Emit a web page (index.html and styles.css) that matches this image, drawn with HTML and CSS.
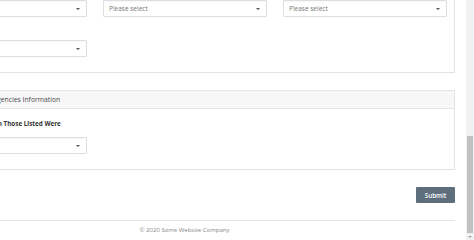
FILE: index.html
```html
<!DOCTYPE html>
<html lang="en">
<head>
  <meta charset="UTF-8" />
  <title>Referral Form</title>
  <link rel="stylesheet" href="styles.css">
</head>
<body>
  <div class="viewport">
    <div class="wrap">

      <!-- Contact panel (scrolled past) -->
      <div class="panel panel-top">
        <div class="panel-body">
          <div class="row">
            <div class="field">
              <label>Relationship</label>
              <div class="select"></div>
            </div>
            <div class="field">
              <label>Preferred Contact</label>
              <div class="select"><span class="placeholder">Please select</span></div>
            </div>
            <div class="field">
              <label>Contact Time</label>
              <div class="select"><span class="placeholder">Please select</span></div>
            </div>
          </div>
          <div class="row">
            <div class="field">
              <label>Language</label>
              <div class="select"></div>
            </div>
          </div>
        </div>
      </div>

      <!-- Agencies panel -->
      <div class="panel">
        <div class="panel-heading">Contact with Other Agencies Information</div>
        <div class="panel-body">
          <div class="row">
            <div class="field">
              <label class="strong">Any Agencies Other Than Those Listed Were</label>
              <div class="select"></div>
            </div>
          </div>
        </div>
      </div>

      <div class="actions">
        <button type="submit">Submit</button>
      </div>

      <hr>
      <footer>&copy; 2020 Some Website Company</footer>
    </div>
  </div>

  <div class="scrollbar">
    <div class="track"></div>
    <div class="thumb"></div>
    <div class="arrow"></div>
  </div>
</body>
</html>
```

FILE: styles.css
```css
* {
  box-sizing: border-box;
}

body {
  margin: 0;
  height: 240px;
  display: flex;
  background: #fff;
  font-family: 'Open Sans', 'Liberation Sans', sans-serif;
  color: #333;
  overflow: hidden;
}

.viewport {
  flex: 1;
  overflow: hidden;
}

.wrap {
  width: 541px;
  margin-left: -86px;
  margin-top: -22px;
}

.panel {
  border: 1px solid #e3e3e3;
  margin-bottom: 17px;
  background: #fff;
}

.panel-heading {
  height: 18px;
  line-height: 17px;
  padding-left: 16px;
  background: #f7f7f7;
  border-bottom: 1px solid #e3e3e3;
  font-size: 6.8px;
  color: #4a4a4a;
  white-space: nowrap;
}

.panel-body {
  padding: 10px 8px 15px;
}

.panel-top .panel-body {
  padding-top: 8px;
  padding-bottom: 15px;
}

.row {
  display: grid;
  grid-template-columns: repeat(3, 164px);
  column-gap: 16px;
}

.row + .row {
  margin-top: 10px;
}

label {
  display: block;
  height: 9px;
  line-height: 9px;
  margin-bottom: 4px;
  font-size: 6px;
  color: #444;
  white-space: nowrap;
}

label.strong {
  font-size: 6.3px;
  font-weight: 700;
  margin-bottom: 9px;
  color: #333;
}

.select {
  position: relative;
  height: 17px;
  border: 1px solid #dedede;
  border-radius: 1px;
  background: #fff;
  box-shadow: inset 0 1px 1px rgba(0,0,0,0.03);
  padding-left: 5px;
  line-height: 15px;
  font-size: 6.5px;
}

.select::after {
  content: "";
  position: absolute;
  right: 6px;
  top: 7px;
  border-left: 2px solid transparent;
  border-right: 2px solid transparent;
  border-top: 2px solid #555;
}

.placeholder {
  color: #777;
}

.actions {
  display: flex;
  justify-content: flex-end;
}

button {
  width: 39px;
  height: 16px;
  border: none;
  border-radius: 1px;
  background: #5e6e7c;
  color: #fff;
  font-family: inherit;
  font-size: 6.3px;
  font-weight: 600;
  padding: 0;
  cursor: pointer;
}

hr {
  border: none;
  border-top: 1px solid #e6e6e6;
  margin: 17px 0 5px;
}

footer {
  text-align: center;
  font-size: 6px;
  color: #888;
}

.scrollbar {
  width: 8px;
  height: 240px;
  background: #f1f1f1;
  display: flex;
  flex-direction: column;
}

.track {
  flex: 1;
}

.thumb {
  height: 97px;
  margin: 0 1px;
  background: #c1c1c1;
}

.arrow {
  height: 7px;
  position: relative;
}

.arrow::after {
  content: "";
  position: absolute;
  left: 2px;
  top: 3px;
  border-left: 2px solid transparent;
  border-right: 2px solid transparent;
  border-top: 2px solid #a3a3a3;
}
```
